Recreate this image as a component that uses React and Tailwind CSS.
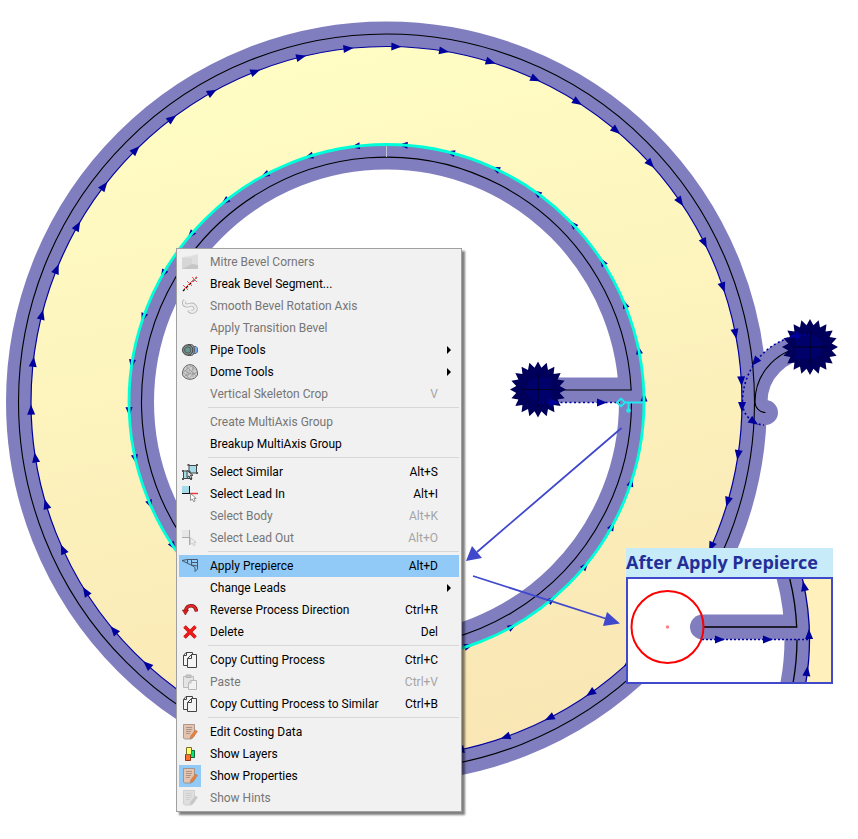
const NAVY = "#00009c";
const BAND = "#807ebe";
const CYAN = "#00ffd8";
const INDIGO = "#4048cc";

// ================= MENU DATA =================
const menuGroups = [
  [
    { label: "Mitre Bevel Corners", icon: "mitre", disabled: true },
    { label: "Break Bevel Segment...", icon: "break" },
    { label: "Smooth Bevel Rotation Axis", icon: "smooth", disabled: true },
    { label: "Apply Transition Bevel", disabled: true },
    { label: "Pipe Tools", icon: "pipe", submenu: true },
    { label: "Dome Tools", icon: "dome", submenu: true },
    { label: "Vertical Skeleton Crop", keys: "V", disabled: true },
  ],
  [
    { label: "Create MultiAxis Group", disabled: true },
    { label: "Breakup MultiAxis Group" },
  ],
  [
    { label: "Select Similar", icon: "similar", keys: "Alt+S" },
    { label: "Select Lead In", icon: "leadIn", keys: "Alt+I" },
    { label: "Select Body", keys: "Alt+K", disabled: true },
    { label: "Select Lead Out", icon: "leadOut", keys: "Alt+O", disabled: true },
  ],
  [
    { label: "Apply Prepierce", icon: "drill", keys: "Alt+D", active: true },
    { label: "Change Leads", submenu: true },
    { label: "Reverse Process Direction", icon: "reverse", keys: "Ctrl+R" },
    { label: "Delete", icon: "remove", keys: "Del" },
  ],
  [
    { label: "Copy Cutting Process", icon: "copy", keys: "Ctrl+C" },
    { label: "Paste", icon: "paste", keys: "Ctrl+V", disabled: true },
    { label: "Copy Cutting Process to Similar", icon: "copy", keys: "Ctrl+B" },
  ],
  [
    { label: "Edit Costing Data", icon: "note" },
    { label: "Show Layers", icon: "layers" },
    { label: "Show Properties", icon: "note", checked: true },
    { label: "Show Hints", icon: "noteOff", disabled: true },
  ],
];

// ================= ICONS =================
const cursor = "M8.5 7.5v7l1.8-1.4 1.3 2.6 1.5-.7-1.2-2.6h2.3z";

const Note = ({ paper, edge, pencil, tip }) => (
  <>
    <path d="M1.500 .5h11v11l-3 3.500h-7l-1-1z" fill={paper} stroke={edge} strokeWidth=".8" />
    <path d="M4 3.500h6M4 5.500h6M4 7.500h5M4 9.500h4" stroke={edge} strokeWidth=".8" />
    <path d="M8 14.500l1-3L13.500 6l2 1.500-4.500 6z" fill={pencil} stroke={tip} strokeWidth=".4" />
  </>
);

const icons = {
  mitre: (
    <>
      <path d="M0 3l8-1 8-2v5l-6 5L0 6z" fill="#e0e0e0" />
      <path d="M0 4h10v11H0z" fill="#d6d6d6" />
      <path d="M10 4l6-4v11h-6z" fill="#dedede" />
      <path d="M0 15l10-5 6 1v4z" fill="#c6c6c6" />
    </>
  ),
  break: (
    <>
      <path d="M1 15L15 1" stroke="#111" strokeWidth="1.400" strokeDasharray="2.500 2" />
      <path
        d="M1 9l5 5M6 9l-5 5M5 5l5 5M10 5l-5 5M10 1l5 5M15 1l-5 5"
        stroke="#f85050"
        strokeWidth="1"
      />
    </>
  ),
  smooth: (
    <>
      <path
        d="M3 2.500C1 5 2 8 5.500 7.500S10 5.500 12 7.500s2.500 4 .5 5.500-5 .5-5-.500"
        stroke="#b4b4b4"
        strokeWidth="4"
      />
      <path
        d="M3 2.500C1 5 2 8 5.500 7.500S10 5.500 12 7.500s2.500 4 .5 5.500-5 .5-5-.500"
        stroke="#ededed"
        strokeWidth="2.400"
      />
    </>
  ),
  pipe: (
    <>
      <path d="M10 4.500h4l1.500 1.500v4L14 11.500h-4z" fill="#78a8f0" stroke="#4a5a78" strokeWidth=".8" />
      <path d="M6 2.500h3.500a3 5.500 0 0 1 0 11H6z" fill="#98a2a4" stroke="#444" strokeWidth=".8" />
      <circle cx="5.700" cy="8" r="5.200" fill="#8a9292" stroke="#333" strokeWidth=".9" />
      <circle cx="5.700" cy="8" r="3.200" fill="#6a9690" stroke="#3a4444" strokeWidth=".7" />
    </>
  ),
  dome: (
    <>
      <path d="M.5 10C.5 4.500 3.500.7 8 .7s7.500 3.800 7.500 9.300c0 2.500-3.500 5.300-7.500 5.300S.5 12.500.5 10z" fill="#cfcfcf" stroke="#555" strokeWidth=".9" />
      <path d="M1 9l4-4 4-3 5 4M2 6l6 4 6-1M5 3l5 5 4 4M3 12l5-2 4-7M7 15l3-4 5-3M2 9l5 5M5 2v8l-3 3M11 2v11M8 5L5 14" stroke="#858585" strokeWidth=".5" />
    </>
  ),
  similar: (
    <>
      <path d="M7 1.500h7.500V9H7zM1.500 7H8v7.500H1.500z" fill="#a6dcea" stroke="#444" />
      <path d="M5.500 0h2v2h-2zM14 0h2v2h-2zM14 8h2v2h-2zM0 6h2v2H0zM0 14h2v2H0zM8 14h2v2H8z" fill="#555" />
      <path d="M5 6.500v7L7 12l1.500 3 1.500-.7-1.500-3H11z" fill="#ddd" stroke="#333" strokeWidth=".9" />
    </>
  ),
  leadIn: (
    <>
      <path d="M0 0h8v8H0z" fill="#a6dcea" />
      <path d="M7.500 0v8M0 7.500h8" stroke="#111" />
      <path d="M8 7.500h8" stroke="#f03030" strokeWidth="1.400" />
      <path d={cursor} fill="#fff" stroke="#777" strokeWidth=".8" />
    </>
  ),
  leadOut: (
    <>
      <path d="M0 0h8v8H0z" fill="#e6e6e6" />
      <path d="M7.500 0v15M0 7.500h8" stroke="#aaa" />
      <path d={cursor} fill="#eee" stroke="#c4c4c4" strokeWidth=".8" />
    </>
  ),
  drill: (
    <path
      d="M0 2.500L5.500 1.500H15.500V11L13 13.500V9.500L11 8L0 2.500M5.500 1.500V5M9.500 1.500V7L15.500 8M9.500 4.500h6"
      stroke="#47586a"
    />
  ),
  reverse: (
    <>
      <path d="M3.500 9.500C4 5.500 6 3.700 9 3.700s5 2.300 5.500 5.800" stroke="#7a1a1a" strokeWidth="3.600" />
      <path d="M3.500 9.500C4 5.500 6 3.700 9 3.700s5 2.300 5.500 5.800" stroke="#ee2525" strokeWidth="2" />
      <path d="M.3 8h6.200l-3.100 5z" fill="#e21b1b" stroke="#7a1a1a" strokeWidth=".6" />
    </>
  ),
  remove: (
    <>
      <path d="M2.500 2.500l11 11M13.500 2.500l-11 11" stroke="#b01010" strokeWidth="3.400" />
      <path d="M2.700 2.700l10.600 10.600M13.300 2.700L2.700 13.300" stroke="#f81818" strokeWidth="2.400" />
    </>
  ),
  copy: (
    <>
      <path d="M5.500 13.500h-4v-10l2.500-3h6.500v2M4.500 .5V3.500h-3" fill="#f4f4f4" stroke="#444" />
      <path d="M5.500 6.500l4-4h5v13h-9zM9.500 2.500v4h-4" fill="#f4f4f4" stroke="#444" />
    </>
  ),
  paste: (
    <>
      <path d="M1.500 2.500h10v11h-10z" fill="#e4e4e4" stroke="#bbb" />
      <path d="M4 1h5v2.500H4z" fill="#c8c8c8" stroke="#b5b5b5" />
      <path d="M6.500 8.500l2-2h6v9h-8zM9 6.500V9H6.500" fill="#f2f2f2" stroke="#b8b8b8" />
    </>
  ),
  note: <Note paper="#e6c3ac" edge="#9a8880" pencil="#f08030" tip="#80706a" />,
  noteOff: <Note paper="#dedede" edge="#cbcbcb" pencil="#c8c8c8" tip="#bdbdbd" />,
  layers: (
    <>
      <path d="M7.500 4.500h5v7h-5z" fill="#00e878" stroke="#15603a" />
      <path d="M3.500 8.500h5v6h-5z" fill="#ff7030" stroke="#8c3510" />
      <path d="M4.500 1.500h5v7h-5z" fill="#ffff70" stroke="#77702a" />
    </>
  ),
};

function MenuItem({ label, icon, keys, submenu, disabled, active, checked }) {
  return (
    <li>
      <button
        type="button"
        disabled={disabled}
        className={`flex h-[22px] w-full items-center text-left ${
          active ? "bg-[#91c9f7]" : ""
        } ${disabled ? "text-[#767676]" : "text-black"}`}
      >
        <span
          className={`flex size-[22px] shrink-0 items-center justify-center ${
            checked ? "bg-[#91c9f7]" : ""
          }`}
        >
          {icon && (
            <svg viewBox="0 0 16 16" className="size-4" fill="none">
              {icons[icon]}
            </svg>
          )}
        </span>
        <span className="ml-[9px] flex-1 whitespace-nowrap">{label}</span>
        <span className={disabled ? "text-[#a5a5a5]" : ""}>{keys}</span>
        <span className="flex w-[21px] shrink-0 justify-center">
          {submenu && (
            <svg viewBox="0 0 4 8" className="h-2 w-1">
              <path d="M0 0l4 4-4 4z" />
            </svg>
          )}
        </span>
      </button>
    </li>
  );
}

function ContextMenu() {
  return (
    <nav className="absolute top-[248px] left-[176px] w-[286px] border border-[#a0a0a0] bg-[#f1f1f1] p-[2px] font-['Roboto','Open_Sans',sans-serif] text-[12px] leading-4 shadow-[3px_3px_2px_#00000080]">
      {menuGroups.map((group, i) => (
        <div key={i}>
          {i > 0 && (
            <div className="h-[6px] pt-[2px]">
              <hr className="ml-[29px] border-[#d7d7d7]" />
            </div>
          )}
          <ul>
            {group.map((item) => (
              <MenuItem key={item.label} {...item} />
            ))}
          </ul>
        </div>
      ))}
    </nav>
  );
}

// ================= DRAWING =================
// Angle is in degrees, clockwise from 12 o'clock
function onCircle(cx, cy, r, angle) {
  const a = (angle * Math.PI) / 180;
  return [cx + r * Math.sin(a), cy - r * Math.cos(a)];
}

function Arrow({ x, y, rotate, size = 5 }) {
  return (
    <path
      d={`M${size} 0L${-size} ${-size + 1}V${size - 1}z`}
      transform={`translate(${x} ${y}) rotate(${rotate})`}
      fill={NAVY}
    />
  );
}

const outerAngles = [90.8, ...Array.from({ length: 46 }, (_, i) => 98.6 + i * 7.735)];
const innerAngles = Array.from({ length: 33 }, (_, i) => 88.9 - i * 10.65);

function Star({ cx, cy, flip }) {
  const points = Array.from({ length: 40 }, (_, i) =>
    onCircle(cx, cy, i % 2 ? 22 : 28, i * 9).join(",")
  ).join(" ");
  return (
    <>
      <polygon points={points} fill="#00005a" />
      <path
        d={
          flip
            ? `M${cx} ${cy - 12}a12 12 0 0 1 0 24h-14v-24z`
            : `M${cx} ${cy - 12}a12 12 0 0 0 0 24h14v-24z`
        }
        fill="#00006a"
      />
      <path d={`M${cx - 16} ${cy}h32M${cx} ${cy - 16}v33`} stroke="#000020" />
    </>
  );
}

function CutDrawing() {
  return (
    <svg viewBox="0 0 858 839" className="block h-auto w-full" fill="none">
      <defs>
        <linearGradient id="plate" x1="0.4" y1="0" x2="0.6" y2="1">
          <stop offset="0" stopColor="#fffdc4" />
          <stop offset="1" stopColor="#f9e6b4" />
        </linearGradient>
      </defs>

      {/* Plate and kerf bands */}
      <circle cx="386.5" cy="402" r="355.500" fill="url(#plate)" />
      <circle cx="386.5" cy="402" r="245" fill="#fff" />
      <circle cx="386.5" cy="402" r="368" stroke={BAND} strokeWidth="25" />
      <circle cx="386.5" cy="402" r="245" stroke={BAND} strokeWidth="25" />
      <path
        d="M810 347a55 55 0 0 0-55 55a10.500 10.500 0 0 0 10.500 10.500"
        stroke={BAND}
        strokeWidth="25"
        strokeLinecap="round"
      />
      <path d="M538 390h94" stroke={BAND} strokeWidth="25" />

      {/* Tool centre lines */}
      <circle cx="386.5" cy="402" r="368" stroke="#000" strokeWidth="1.100" />
      <path d="M631.500 402A245 245 0 1 1 631.200 390H538" stroke="#000" strokeWidth="1.100" />
      <path d="M810 347a55 55 0 0 0-55 55a10.500 10.500 0 0 0 10.500 10.500" stroke="#000" strokeWidth="1.100" />
      <path d="M386.500 146v11" stroke="#c4c4d8" />

      {/* Outer profile */}
      <circle cx="386.5" cy="402" r="355.500" stroke={NAVY} strokeWidth="1.200" />
      {outerAngles.map((angle) => {
        const [x, y] = onCircle(386.5, 402, 355.5, angle);
        return <Arrow key={angle} x={x} y={y} rotate={angle} />;
      })}

      {/* Inner profile */}
      {innerAngles.map((angle) => {
        const [x, y] = onCircle(386.5, 402, 257.5, angle);
        return <Arrow key={angle} x={x} y={y} rotate={angle + 180} size={4.500} />;
      })}
      <circle cx="386.5" cy="402" r="257.500" stroke={CYAN} strokeWidth="2.800" />

      {/* Lead ins and lead out */}
      <Star cx={538} cy={389.5} />
      <Star cx={810} cy={347} flip />
      <path
        d="M538 402.500h82M810 334.500A67.500 67.500 0 0 0 742.500 402A22.500 22.500 0 0 0 764 425"
        stroke={NAVY}
        strokeWidth="1.600"
        strokeDasharray="2 2.500"
      />
      <Arrow x={554} y={402.5} rotate={0} />
      <Arrow x={602} y={402.5} rotate={0} />
      <Arrow x={794} y={336} rotate={168} />
      <Arrow x={755} y={362} rotate={130} />
      <Arrow x={754} y={422} rotate={35} />
      <path
        d="M617 402.500l4-4 4 4-4 4zM625 402.500h19M628.500 403v7"
        stroke="#20e8f0"
        strokeWidth="1.800"
      />
      <circle cx="628.500" cy="410.500" r="2.300" fill="#20e8f0" />

      {/* Callout arrows */}
      <path d="M621.500 428L477 552M473 576l134 43" stroke={INDIGO} strokeWidth="1.800" />
      <path d="M466 561l6-15 10 12zM620 623.500l-13-11.500-4 14z" fill={INDIGO} />
    </svg>
  );
}

function PrepierceInset() {
  return (
    <figure className="absolute top-[548px] left-[626px] flex w-[207px] flex-col">
      <figcaption className="h-[29px] bg-[#c8ebfa] whitespace-nowrap font-['Open_Sans','Noto_Sans',sans-serif] text-[18px] leading-[29px] font-bold text-[#232f98]">
        After Apply Prepierce
      </figcaption>
      <div className="border-2 border-[#4048cc] bg-white">
        <svg viewBox="628 579 203 103" className="block w-full" fill="none">
          <rect x="780" y="579" width="51" height="103" fill="#fff0bc" />
          <circle cx="552" cy="639" r="245" fill="#fff" stroke={BAND} strokeWidth="25" />
          <path d="M702.500 627H797" stroke={BAND} strokeWidth="25" strokeLinecap="round" />
          <path
            d="M703 627H796.700A245 245 0 0 0 789.800 579M797 639.500A245 245 0 0 1 793.200 682"
            stroke="#000"
            strokeWidth="1.300"
          />
          <circle cx="552" cy="639" r="257.500" stroke={NAVY} strokeWidth="1.300" />
          <path d="M702 639.500h107" stroke={NAVY} strokeWidth="1.400" strokeDasharray="2 2" />
          <Arrow x={720} y={639.5} rotate={0} />
          <Arrow x={768} y={639.5} rotate={0} />
          <Arrow x={804} y={586} rotate={-102} />
          <Arrow x={809} y={634} rotate={-91} />
          <Arrow x={807} y={671} rotate={-83} />
          <circle cx="667.500" cy="627" r="36" stroke="#f00" strokeWidth="2" />
          <circle cx="667.500" cy="627" r="1.700" fill="#ff8080" />
        </svg>
      </div>
    </figure>
  );
}

export default function App() {
  return (
    <main className="relative min-h-screen overflow-hidden bg-white">
      <CutDrawing />
      <PrepierceInset />
      <ContextMenu />
    </main>
  );
}
